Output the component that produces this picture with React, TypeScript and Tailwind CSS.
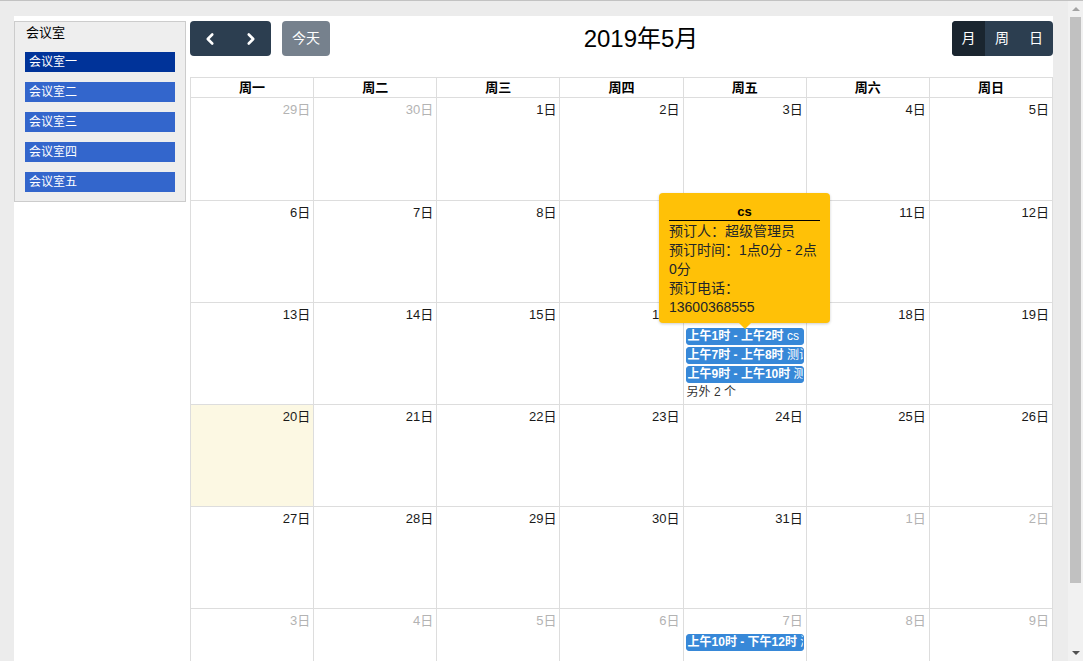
import { ChevronLeft, ChevronRight } from "lucide-react";

type CalEvent = { time: string; title: string };

const rooms = ["会议室一", "会议室二", "会议室三", "会议室四", "会议室五"];
const weekdays = ["周一", "周二", "周三", "周四", "周五", "周六", "周日"];

const events: Record<string, CalEvent[]> = {
  "5-17": [
    { time: "上午1时 - 上午2时", title: "cs" },
    { time: "上午7时 - 上午8时", title: "测试会议" },
    { time: "上午9时 - 上午10时", title: "测试会议" },
  ],
  "6-7": [{ time: "上午10时 - 下午12时", title: "测试会议" }],
};
const more: Record<string, number> = { "5-17": 2 };

const days = Array.from({ length: 42 }, (_, i) => {
  const d = new Date(2019, 3, 29 + i);
  return { m: d.getMonth() + 1, d: d.getDate(), first: i < 7 };
});

function DayCell({ m, d, first }: { m: number; d: number; first: boolean }) {
  const key = `${m}-${d}`;
  const other = m !== 5;
  const today = m === 5 && d === 20;
  const list = events[key] ?? [];
  return (
    <div
      className={`overflow-hidden border-r border-b border-[#dddddd] ${
        first ? "h-[103px]" : "h-[102px]"
      } ${today ? "bg-[#fcf8e3]" : "bg-white"}`}
    >
      <div
        className={`h-[25px] pt-[2px] pr-[3px] text-right text-[13px] leading-[19px] ${
          other ? "text-[#b3b3b3]" : "text-[#1a1a1a]"
        }`}
      >
        {d}日
      </div>
      <div className="flex flex-col gap-[2px] px-[2px]">
        {list.map((ev, i) => (
          <div
            key={i}
            className="h-[17px] overflow-hidden whitespace-nowrap rounded-[3px] border border-[#3788d8] bg-[#3788d8] px-[1px] text-[12px] leading-[15px] text-white"
          >
            <span className="font-bold">{ev.time}</span> {ev.title}
          </div>
        ))}
      </div>
      {more[key] && (
        <div className="ml-[3px] mt-[2px] text-[12px] leading-[15px] text-[#333333]">
          另外 {more[key]} 个
        </div>
      )}
    </div>
  );
}

export default function App() {
  return (
    <div className="flex h-screen overflow-hidden border-t border-[#c2c2c2] bg-[#ececec] font-['Liberation_Sans','Noto_Sans_CJK_SC',sans-serif] text-[#1a1a1a]">
      {/* PAGE */}
      <div className="flex-1 overflow-hidden pl-[14px] pr-[15px] pt-[15px]">
        <div className="flex gap-[4px] bg-white pt-[5px] pb-[8px]">
          {/* SIDEBAR */}
          <div className="h-[181px] w-[172px] shrink-0 border border-[#cccccc] bg-[#eeeeee] px-[10px]">
            <div className="mt-[1px] h-[20px] pl-[1px] text-[13px] leading-[20px] text-black">
              会议室
            </div>
            <div className="mt-[9px] flex flex-col gap-[10px]">
              {rooms.map((r, i) => (
                <div
                  key={r}
                  className={`h-[20px] w-[150px] pl-[4px] text-[12px] leading-[20px] text-white ${
                    i === 0 ? "bg-[#003399]" : "bg-[#3366cc]"
                  }`}
                >
                  {r}
                </div>
              ))}
            </div>
          </div>

          {/* CALENDAR */}
          <div className="relative w-[863px] shrink-0">
            <div className="mb-[21px] flex h-[35px] items-center justify-between">
              <div className="flex items-center">
                <div className="flex h-[35px] overflow-hidden rounded-[4px] bg-[#2c3e50]">
                  <div className="flex w-[40px] items-center justify-center text-white">
                    <ChevronLeft size={18} strokeWidth={3.5} />
                  </div>
                  <div className="flex w-[41px] items-center justify-center text-white">
                    <ChevronRight size={18} strokeWidth={3.5} />
                  </div>
                </div>
                <div className="ml-[11px] flex h-[35px] w-[48px] items-center justify-center rounded-[4px] bg-[#76818d] text-[14px] text-white">
                  今天
                </div>
              </div>
              <h2 className="text-[24px] leading-[35px] text-black">2019年5月</h2>
              <div className="flex h-[35px] overflow-hidden rounded-[4px] bg-[#2c3e50] text-[14px] text-white">
                <div className="flex w-[33px] items-center justify-center bg-[#1a252f]">月</div>
                <div className="flex w-[34px] items-center justify-center">周</div>
                <div className="flex w-[34px] items-center justify-center">日</div>
              </div>
            </div>

            <div className="border-l border-t border-[#dddddd]">
              <div className="grid grid-cols-7">
                {weekdays.map((w) => (
                  <div
                    key={w}
                    className="h-[20px] border-r border-b border-[#dddddd] text-center text-[13px] font-bold leading-[19px] text-black"
                  >
                    {w}
                  </div>
                ))}
              </div>
              <div className="grid grid-cols-7">
                {days.map((x) => (
                  <DayCell key={`${x.m}-${x.d}`} m={x.m} d={x.d} first={x.first} />
                ))}
              </div>
            </div>

            {/* POPOVER */}
            <div className="absolute left-[469px] top-[172px] w-[171px] rounded-[4px] bg-[#ffc107] px-[10px] pt-[10px] pb-[6px] text-[14px] leading-[19px] text-[#212529] shadow-[0_1px_3px_rgba(0,0,0,0.2)]">
              <div className="border-b border-black text-center text-[13px] font-bold leading-[17px] text-black">
                cs
              </div>
              <div className="pt-[1px]">
                <div>预订人：超级管理员</div>
                <div>预订时间：1点0分 - 2点0分</div>
                <div>预订电话：13600368555</div>
              </div>
              <div className="absolute left-1/2 top-full h-0 w-0 -translate-x-1/2 border-x-[6px] border-t-[6px] border-x-transparent border-t-[#ffc107]" />
            </div>
          </div>
        </div>
      </div>

      {/* SCROLLBAR */}
      <div className="relative flex w-[15px] shrink-0 flex-col bg-[#f1f1f1]">
        <div className="flex h-[16px] items-center justify-center">
          <div className="h-0 w-0 border-x-[4px] border-b-[4px] border-x-transparent border-b-[#a3a3a3]" />
        </div>
        <div className="mx-[2px] h-[566px] bg-[#c1c1c1]" />
        <div className="flex-1" />
        <div className="flex h-[16px] items-center justify-center">
          <div className="h-0 w-0 border-x-[4px] border-t-[4px] border-x-transparent border-t-[#505050]" />
        </div>
      </div>
    </div>
  );
}
